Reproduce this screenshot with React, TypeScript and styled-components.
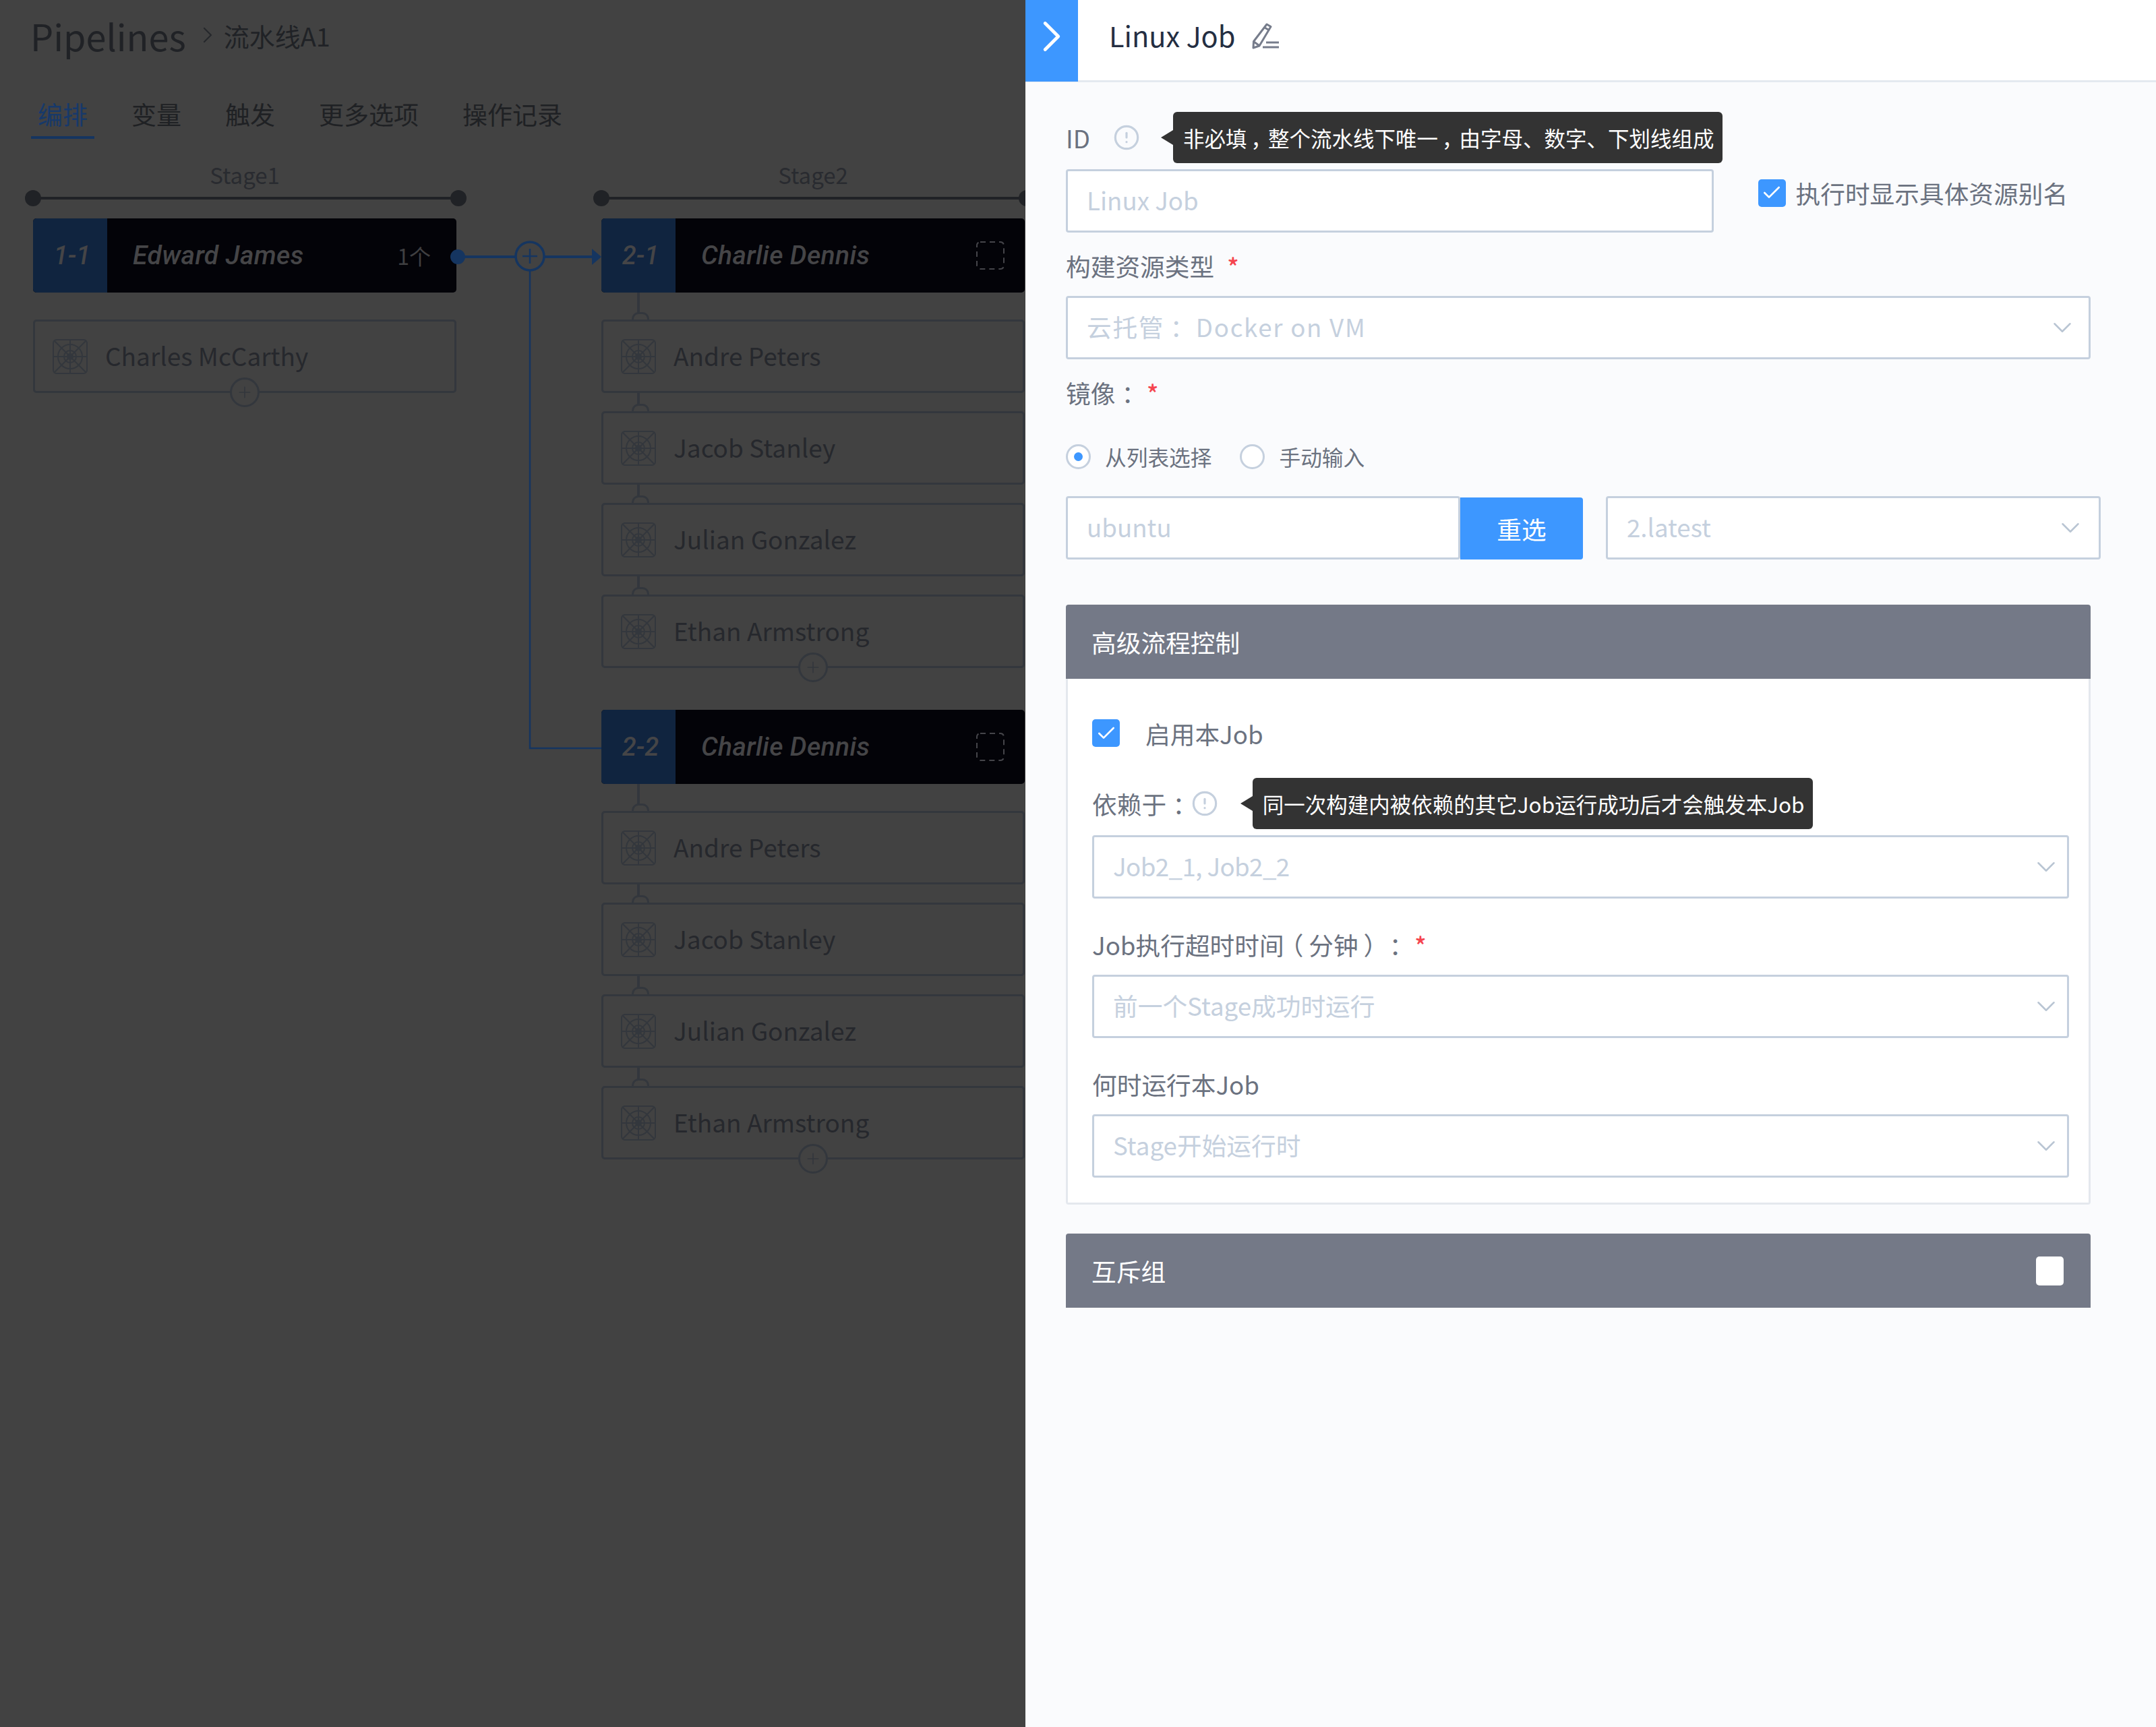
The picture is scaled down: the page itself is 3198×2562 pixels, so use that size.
import styled, { createGlobalStyle } from "styled-components";
import { AlertCircle, Check, ChevronDown, ChevronRight, Plus } from "lucide-react";

const GlobalStyle = createGlobalStyle`
  * {
    box-sizing: border-box;
  }
  html,
  body {
    margin: 0;
    height: 2562px;
    overflow: hidden;
    background: #424242;
    font-family: "Noto Sans CJK SC", "Noto Sans", sans-serif;
  }
`;

const stages = [
  {
    title: "Stage1",
    groups: [
      { id: "1-1", name: "Edward James", count: "1个", jobs: ["Charles McCarthy"], linked: false },
    ],
  },
  {
    title: "Stage2",
    groups: [
      {
        id: "2-1",
        name: "Charlie Dennis",
        jobs: ["Andre Peters", "Jacob Stanley", "Julian Gonzalez", "Ethan Armstrong"],
        linked: true,
      },
      {
        id: "2-2",
        name: "Charlie Dennis",
        jobs: ["Andre Peters", "Jacob Stanley", "Julian Gonzalez", "Ethan Armstrong"],
        linked: true,
      },
    ],
  },
];

function JobIcon() {
  return (
    <svg width="52" height="52" viewBox="0 0 52 52" fill="none" stroke="#33373d" strokeWidth="2">
      <rect x="1" y="1" width="50" height="50" rx="5" />
      <circle cx="26" cy="26" r="18" />
      <circle cx="26" cy="26" r="9" />
      <circle cx="26" cy="26" r="4" />
      <path d="M26 1v50M1 26h50M3 3l46 46M49 3L3 49" />
    </svg>
  );
}

function PencilIcon() {
  return (
    <EditIcon width="42" height="40" viewBox="0 0 42 40" fill="none" stroke="#767c8b" strokeWidth="3">
      <path d="M23 3l6 3.5L12 35l-9 3 .5-9.5zM20 8l6 3.5M4 29l7 5" strokeLinejoin="round" />
      <path d="M22 30h19M17 37h24" />
    </EditIcon>
  );
}

function DashedBox() {
  return (
    <DashedIcon width="42" height="42" viewBox="0 0 42 42" fill="none">
      <rect x="1" y="1" width="40" height="40" rx="5" stroke="#45454a" strokeWidth="2" strokeDasharray="8 6" />
    </DashedIcon>
  );
}

function Connectors() {
  return (
    <FlowLines width="900" height="900" viewBox="0 0 900 900" fill="none">
      <circle cx="679" cy="141" r="11" fill="#153560" />
      <path d="M680 141H878" stroke="#153560" strokeWidth="4" />
      <path d="M786 160V870H892" stroke="#153560" strokeWidth="2.5" />
      <path d="M878 129l14 12-14 12z" fill="#153560" />
      <circle cx="786" cy="140" r="21" fill="#424242" stroke="#153560" strokeWidth="3.5" />
      <path d="M786 129v22M775 140h22" stroke="#153560" strokeWidth="2.5" />
    </FlowLines>
  );
}

export default function App() {
  return (
    <Page>
      <GlobalStyle />
      <Crumbs>
        <Title>Pipelines</Title>
        <CrumbArrow size={40} strokeWidth={1.3} />
        <CrumbName>流水线A1</CrumbName>
      </Crumbs>
      <Tabs>
        <Tab $active>编排</Tab>
        <Tab>变量</Tab>
        <Tab>触发</Tab>
        <Tab>更多选项</Tab>
        <Tab>操作记录</Tab>
      </Tabs>
      <Canvas>
        <Connectors />
        {stages.map((stage) => (
          <Stage key={stage.title}>
            <StageName>{stage.title}</StageName>
            <StageLine />
            {stage.groups.map((group) => (
              <Group key={group.id}>
                <JobHead>
                  <JobNumber>{group.id}</JobNumber>
                  <JobName>{group.name}</JobName>
                  {group.count ? <JobCount>{group.count}</JobCount> : <DashedBox />}
                </JobHead>
                {group.jobs.map((job, i) => (
                  <JobCard key={job} $linked={group.linked} $first={i === 0}>
                    <JobIcon />
                    <JobCardName>{job}</JobCardName>
                    {i === group.jobs.length - 1 && (
                      <AddBadge>
                        <Plus size={26} strokeWidth={1.6} />
                      </AddBadge>
                    )}
                  </JobCard>
                ))}
              </Group>
            ))}
          </Stage>
        ))}
      </Canvas>

      <Drawer>
        <DrawerHeader>
          <CollapseButton>
            <ChevronRight size={80} strokeWidth={1.5} color="#fff" />
          </CollapseButton>
          <DrawerTitle>Linux Job</DrawerTitle>
          <PencilIcon />
        </DrawerHeader>
        <DrawerBody>
          <IdRow>
            <IdField>
              <LabelRow>
                <Label>ID</Label>
                <HelpIcon $left={34} />
                <Tooltip $left={49}>
                  非必填<Punct>，</Punct>整个流水线下唯一<Punct>，</Punct>由字母、数字、下划线组成
                </Tooltip>
              </LabelRow>
              <Control $width="961px">
                <Placeholder>Linux Job</Placeholder>
              </Control>
            </IdField>
            <AliasCheck>
              <CheckBox>
                <Check size={32} strokeWidth={2} color="#fff" />
              </CheckBox>
              <AliasText>执行时显示具体资源别名</AliasText>
            </AliasCheck>
          </IdRow>

          <FieldLabel>
            <Label>构建资源类型</Label>
            <Star $gap={19} />
          </FieldLabel>
          <Control>
            <Placeholder $tracking={1.7}>
              云托管<Punct>：</Punct>&nbsp;Docker on VM
            </Placeholder>
            <SelectArrow size={46} strokeWidth={1.3} />
          </Control>

          <FieldLabel>
            <Label>
              镜像<Punct>：</Punct>
            </Label>
            <Star $gap={10} />
          </FieldLabel>
          <RadioRow>
            <Radio $checked />
            <RadioText>从列表选择</RadioText>
            <Radio />
            <RadioText>手动输入</RadioText>
          </RadioRow>
          <ImageRow>
            <Control $width="585px">
              <Placeholder>ubuntu</Placeholder>
            </Control>
            <ResetButton>重选</ResetButton>
            <Control $width="734px" $gap="34px">
              <Placeholder>2.latest</Placeholder>
              <SelectArrow size={46} strokeWidth={1.3} $right={-9} />
            </Control>
          </ImageRow>

          <SectionHead $top="67px">高级流程控制</SectionHead>
          <SectionBody>
            <EnableRow>
              <CheckBox>
                <Check size={32} strokeWidth={2} color="#fff" />
              </CheckBox>
              <Label>启用本Job</Label>
            </EnableRow>
            <LabelRow>
              <Label>
                依赖于<Punct>：</Punct>
              </Label>
              <HelpIcon $left={0} />
              <Tooltip $left={51}>同一次构建内被依赖的其它Job运行成功后才会触发本Job</Tooltip>
            </LabelRow>
            <Control>
              <Placeholder $tracking={-0.6}>Job2_1, Job2_2</Placeholder>
              <SelectArrow size={46} strokeWidth={1.3} $right={-20} />
            </Control>
            <InnerLabel>
              <Label>
                Job执行超时时间<Punct>（</Punct>分钟<Punct>）</Punct>
                <Punct>：</Punct>
              </Label>
              <Star $gap={10} />
            </InnerLabel>
            <Control>
              <Placeholder>前一个Stage成功时运行</Placeholder>
              <SelectArrow size={46} strokeWidth={1.3} $right={-20} />
            </Control>
            <InnerLabel>
              <Label>何时运行本Job</Label>
            </InnerLabel>
            <Control>
              <Placeholder>Stage开始运行时</Placeholder>
              <SelectArrow size={46} strokeWidth={1.3} $right={-20} />
            </Control>
          </SectionBody>
          <SectionHead $top="43px">
            互斥组
            <WhiteBox />
          </SectionHead>
        </DrawerBody>
      </Drawer>
    </Page>
  );
}

const Page = styled.div`
  width: 3198px;
  height: 2562px;
  overflow: hidden;
  background: #424242;
`;
const Crumbs = styled.div`
  height: 104px;
  padding-left: 45px;
  display: flex;
  align-items: center;
`;
const Title = styled.div`
  font-size: 54px;
  color: #202226;
`;
const CrumbArrow = styled(ChevronRight)`
  color: #26282c;
  margin: 0 4px 0 12px;
`;
const CrumbName = styled.div`
  font-size: 38px;
  color: #202226;
`;
const Tabs = styled.div`
  margin: 31px 0 0 46px;
  display: flex;
  gap: 45px;
`;
const Tab = styled.div<{ $active?: boolean }>`
  height: 71px;
  padding: 3px 10px 0;
  line-height: 62px;
  font-size: 37px;
  color: ${(p) => (p.$active ? "#17396a" : "#1f2124")};
  border-bottom: 4px solid ${(p) => (p.$active ? "#153560" : "transparent")};
`;
const Canvas = styled.div`
  position: relative;
  margin-top: 34px;
  padding-left: 49px;
  display: flex;
  gap: 215px;
`;
const FlowLines = styled.svg`
  position: absolute;
  left: 0;
  top: 0;
  z-index: 2;
`;
const Stage = styled.div`
  width: 628px;
  flex: none;
`;
const StageName = styled.div`
  height: 42px;
  margin-top: -2px;
  line-height: 42px;
  text-align: center;
  font-size: 33px;
  color: #292b30;
`;
const StageLine = styled.div`
  position: relative;
  width: 631px;
  height: 4px;
  margin: 12px 0 28px;
  background: #202226;
  &::before,
  &::after {
    content: "";
    position: absolute;
    top: -10px;
    width: 24px;
    height: 24px;
    border-radius: 50%;
    background: #202226;
  }
  &::before {
    left: -12px;
  }
  &::after {
    right: -12px;
  }
`;
const Group = styled.div`
  margin-bottom: 62px;
`;
const JobHead = styled.div`
  height: 110px;
  display: flex;
  align-items: center;
  border-radius: 5px;
  overflow: hidden;
  background: #030308;
  font-family: Roboto, sans-serif;
  font-style: italic;
  font-weight: 500;
  color: #454547;
`;
const JobNumber = styled.div`
  width: 110px;
  height: 100%;
  padding-left: 6px;
  line-height: 110px;
  text-align: center;
  font-size: 38px;
  background: #10243f;
`;
const JobName = styled.div`
  margin-left: 38px;
  font-size: 39px;
  letter-spacing: 0.4px;
  flex: 1;
`;
const JobCount = styled.div`
  margin-right: 38px;
  font-family: "Noto Sans CJK SC", "Noto Sans", sans-serif;
  font-style: normal;
  font-weight: 400;
  font-size: 32px;
  color: #3f3f41;
`;
const DashedIcon = styled.svg`
  margin-right: 30px;
`;
const JobCard = styled.div<{ $linked?: boolean; $first?: boolean }>`
  position: relative;
  height: 109px;
  margin-top: ${(p) => (p.$first ? "40px" : "27px")};
  padding-left: 26px;
  display: flex;
  align-items: center;
  gap: 26px;
  border: 3px solid #33373d;
  border-radius: 5px;
  ${(p) =>
    p.$linked &&
    `
    &::before {
      content: "";
      position: absolute;
      left: 50px;
      top: ${p.$first ? "-43px" : "-30px"};
      width: 4px;
      height: ${p.$first ? "32px" : "19px"};
      background: #33373d;
    }
    &::after {
      content: "";
      position: absolute;
      left: 42px;
      top: -14px;
      width: 20px;
      height: 11px;
      border: 3px solid #33373d;
      border-bottom: 0;
      border-radius: 10px 10px 0 0;
    }
  `}
`;
const JobCardName = styled.div`
  font-size: 37px;
  margin-top: -3px;
  color: #26282d;
`;
const AddBadge = styled.div`
  position: absolute;
  left: 50%;
  bottom: -24px;
  width: 44px;
  height: 44px;
  margin-left: -22px;
  display: flex;
  align-items: center;
  justify-content: center;
  border: 3px solid #33373d;
  border-radius: 50%;
  background: #424242;
  color: #33373d;
`;

const Drawer = styled.div`
  position: fixed;
  top: 0;
  left: 1521px;
  width: 1677px;
  height: 2562px;
  z-index: 5;
  background: #fafbfd;
`;
const DrawerHeader = styled.div`
  height: 122px;
  display: flex;
  align-items: center;
  background: #fff;
  border-bottom: 3px solid #e4e9f0;
`;
const CollapseButton = styled.div`
  width: 78px;
  height: 122px;
  flex: none;
  display: flex;
  align-items: center;
  justify-content: center;
  padding-bottom: 12px;
  background: #3d97ff;
`;
const DrawerTitle = styled.div`
  margin: -16px 24px 0 46px;
  font-size: 41.5px;
  color: #242e42;
`;
const EditIcon = styled.svg`
  margin-top: -14px;
`;
const DrawerBody = styled.div`
  padding: 44px 0 0 60px;
  width: 1580px;
`;
const IdRow = styled.div`
  display: flex;
  align-items: flex-end;
`;
const IdField = styled.div``;
const LabelRow = styled.div`
  height: 76px;
  display: flex;
  align-items: center;
`;
const Label = styled.div`
  font-size: 36.7px;
  color: #6b7280;
`;
const Punct = styled.span`
  display: inline-block;
  width: 1em;
  text-align: center;
  font-feature-settings: "palt";
`;
const HelpIcon = styled(AlertCircle).attrs({ size: 40, strokeWidth: 1.9 })<{ $left: number }>`
  color: #c5d0de;
  margin-left: ${(p) => p.$left}px;
`;
const Tooltip = styled.div<{ $left: number }>`
  position: relative;
  height: 76px;
  margin-left: ${(p) => p.$left}px;
  padding: 0 12px 0 15px;
  font-size: 31.5px;
  line-height: 76px;
  white-space: pre;
  color: #fff;
  background: #333;
  border-radius: 6px;
  &::before {
    content: "";
    position: absolute;
    left: -18px;
    top: 27px;
    border-style: solid;
    border-width: 11px 18px 11px 0;
    border-color: transparent #333 transparent transparent;
  }
`;
const Control = styled.div<{ $width?: string; $gap?: string }>`
  width: ${(p) => p.$width || "100%"};
  height: 94px;
  margin-top: 9px;
  margin-left: ${(p) => p.$gap || 0};
  padding: 0 28px;
  flex: none;
  display: flex;
  align-items: center;
  justify-content: space-between;
  background: #fff;
  border: 3px solid #c5d0de;
  border-radius: 4px;
`;
const Placeholder = styled.div<{ $tracking?: number }>`
  font-size: 36.7px;
  margin-top: -4px;
  letter-spacing: ${(p) => p.$tracking || 0}px;
  color: #c5d0de;
`;
const SelectArrow = styled(ChevronDown)<{ $right?: number }>`
  color: #b9c5d3;
  margin-right: ${(p) => p.$right ?? -12}px;
`;
const AliasCheck = styled.div`
  margin: 0 0 32px 53px;
  display: flex;
  align-items: center;
  gap: 15px;
`;
const CheckBox = styled.div`
  width: 41px;
  height: 41px;
  flex: none;
  display: flex;
  align-items: center;
  justify-content: center;
  background: #3d97ff;
  border-radius: 5px;
`;
const AliasText = styled.div`
  font-size: 36.7px;
  white-space: nowrap;
  color: #6b7280;
`;
const FieldLabel = styled.div`
  height: 70px;
  margin-top: 15px;
  padding-bottom: 3px;
  display: flex;
  align-items: center;
`;
const InnerLabel = styled(FieldLabel)`
  margin-top: 34px;
`;
const Star = styled.span<{ $gap: number }>`
  margin-left: ${(p) => p.$gap}px;
  &::before {
    content: "*";
    font-size: 36px;
    font-weight: 500;
    color: #f5454f;
  }
`;
const RadioRow = styled.div`
  height: 44px;
  margin-top: 37px;
  display: flex;
  align-items: center;
`;
const Radio = styled.span<{ $checked?: boolean }>`
  width: 37px;
  height: 37px;
  flex: none;
  position: relative;
  border: 3px solid #c5d0de;
  border-radius: 50%;
  background: #fff;
  &::after {
    content: "";
    display: ${(p) => (p.$checked ? "block" : "none")};
    position: absolute;
    left: 9px;
    top: 9px;
    width: 13px;
    height: 13px;
    border-radius: 50%;
    background: #3d97ff;
  }
`;
const RadioText = styled.div`
  margin: 0 42px 0 21px;
  font-size: 31.7px;
  color: #6b7280;
`;
const ImageRow = styled.div`
  margin-top: 28px;
  display: flex;
  align-items: flex-start;
`;
const ResetButton = styled.div`
  width: 182px;
  height: 92px;
  margin-top: 11px;
  flex: none;
  display: flex;
  align-items: center;
  justify-content: center;
  font-size: 36.7px;
  color: #fff;
  background: #3d97ff;
  border-radius: 0 4px 4px 0;
`;
const SectionHead = styled.div<{ $top: string }>`
  height: 110px;
  margin-top: ${(p) => p.$top};
  padding: 0 40px 0 38px;
  display: flex;
  align-items: center;
  justify-content: space-between;
  font-size: 36.7px;
  color: #fff;
  background: #747987;
  border-radius: 4px 4px 0 0;
`;
const SectionBody = styled.div`
  height: 780px;
  padding: 60px 29px 0 36px;
  background: #fff;
  border: 3px solid #e4e8ee;
  border-top: 0;
  border-radius: 0 0 4px 4px;
`;
const EnableRow = styled.div`
  height: 41px;
  margin-bottom: 46px;
  display: flex;
  align-items: center;
  gap: 38px;
`;
const WhiteBox = styled.div`
  width: 41px;
  height: 43px;
  background: #fff;
  border-radius: 5px;
`;
